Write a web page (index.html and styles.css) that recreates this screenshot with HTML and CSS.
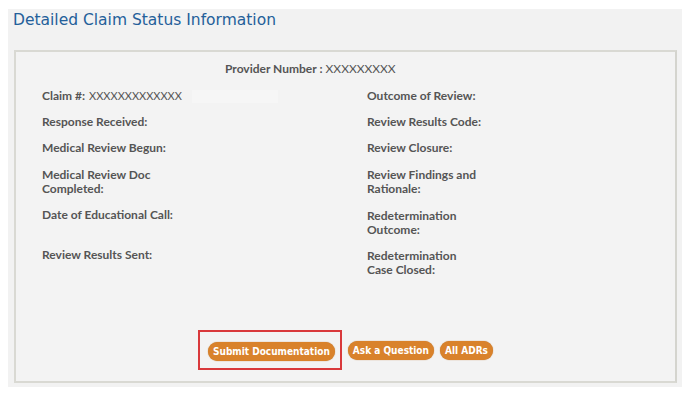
FILE: index.html
```html
<!DOCTYPE html>
<html>
<head>
<meta charset="utf-8">
<link rel="stylesheet" href="styles.css">
</head>
<body>
<div class="panel">
  <h1 class="title">Detailed Claim Status Information</h1>
  <div class="box">
    <div class="provider"><b>Provider Number :</b> XXXXXXXXX</div>
    <div class="grid">
      <div class="col">
        <div class="item claim"><b>Claim #:</b> <span class="val">XXXXXXXXXXXXX</span><span class="ghost"></span></div>
        <div class="item">Response Received:</div>
        <div class="item">Medical Review Begun:</div>
        <div class="item wide">Medical Review Doc<br>Completed:</div>
        <div class="item">Date of Educational Call:</div>
        <div class="item gap">Review Results Sent:</div>
      </div>
      <div class="col">
        <div class="item">Outcome of Review:</div>
        <div class="item">Review Results Code:</div>
        <div class="item">Review Closure:</div>
        <div class="item wide">Review Findings and<br>Rationale:</div>
        <div class="item wide">Redetermination<br>Outcome:</div>
        <div class="item">Redetermination<br>Case Closed:</div>
      </div>
    </div>
    <div class="actions">
      <div class="highlight"><button class="btn">Submit Documentation</button></div>
      <button class="btn">Ask a Question</button>
      <button class="btn">All ADRs</button>
    </div>
  </div>
</div>
</body>
</html>
```
FILE: styles.css
```css
html, body { margin: 0; padding: 0; background: #ffffff; }
body { width: 689px; height: 393px; overflow: hidden; font-family: "Lato", "Open Sans", sans-serif; }
.panel {
  margin: 9px 0 0 8px;
  width: 674px;
  height: 378px;
  background: #f2f2f2;
  box-sizing: border-box;
  padding: 0 5px 4px 6px;
  display: flex;
  flex-direction: column;
}
.title {
  margin: 0 0 0 -1px;
  height: 41px;
  padding: 2px 0 0 0;
  box-sizing: border-box;
  font-family: "DejaVu Sans", sans-serif;
  font-weight: normal;
  font-size: 15.5px;
  color: #24609a;
}
.box {
  flex: 1;
  border: 2px solid #d9d9d3;
  border-right-color: #d4d4ce;
  background: #f3f3f3;
  display: flex;
  flex-direction: column;
  padding: 10px 0 0 26px;
  color: #555555;
  font-size: 12px;
  font-weight: bold;
}
.provider { padding-left: 183px; height: 27px; line-height: 14px; font-weight: normal; }
.provider b { font-weight: bold; }
.grid { display: grid; grid-template-columns: 325px 1fr; }
.col { display: flex; flex-direction: column; gap: 12px; }
.item { line-height: 14px; }
.item.wide { margin-top: 1px; }
.item.gap { margin-top: 14px; }
.claim { font-weight: normal; display: flex; align-items: center; }
.claim b { margin-right: 4px; }
.val { font-size: 11px; }
.ghost { display: inline-block; width: 86px; height: 13px; background: #f6f6f6; margin-left: 10px; }
.actions {
  margin-top: auto;
  margin-bottom: 11px;
  display: flex;
  align-items: center;
  padding-left: 156px;
  gap: 6px;
}
.highlight {
  border: 2px solid #d9393b;
  padding: 10px 5px 7px 8px;
}
.btn {
  border: none;
  background: #d9822b;
  color: #fff;
  font-family: "DejaVu Sans Condensed", "DejaVu Sans", sans-serif;
  font-weight: bold;
  font-size: 10px;
  border-radius: 10px;
  height: 19px;
  padding: 0 5px;
  box-shadow: 0 0 1px #b36a20;
}
```
